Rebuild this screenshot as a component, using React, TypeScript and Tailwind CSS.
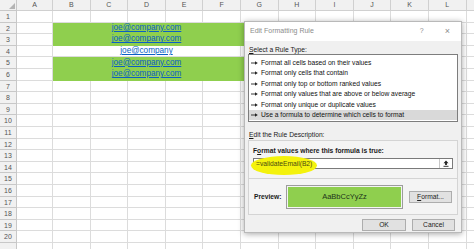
const COLS = ["A", "B", "C", "D", "E", "F", "G", "H", "I", "J", "K", "L", "M"];
const ROWS = Array.from({ length: 21 }, (_, i) => i + 1);
const GREEN = [2, 3, 5, 6];
const EMAIL: Record<number, string> = {
  2: "joe@company.com",
  3: "joe@company.com",
  4: "joe@company",
  5: "joe@company.com",
  6: "joe@company.com",
};

const RULES = [
  "Format all cells based on their values",
  "Format only cells that contain",
  "Format only top or bottom ranked values",
  "Format only values that are above or below average",
  "Format only unique or duplicate values",
  "Use a formula to determine which cells to format",
];

function Arrow() {
  return (
    <svg width="7" height="4" viewBox="0 0 7 4" className="shrink-0">
      <path d="M0 2h4.5" stroke="#222" strokeWidth="0.9" />
      <path d="M4 0.3L6.8 2L4 3.7z" fill="#222" />
    </svg>
  );
}

function Sheet() {
  return (
    <div className="flex flex-col">
      <div className="flex h-[11px] bg-[#f1f1f1]">
        <div className="relative w-[17px] shrink-0 border-r border-b border-[#c8c8c8]">
          <svg width="6" height="6" viewBox="0 0 6 6" className="absolute right-[1px] bottom-[1px]">
            <path d="M6 0V6H0z" fill="#b4b4b4" />
          </svg>
        </div>
        {COLS.map((c, i) => (
          <div
            key={c}
            className={`${i === 0 ? "w-[36px]" : "w-[37.6px]"} shrink-0 border-r border-b border-[#d0d0d0] text-center text-[7px] leading-[10px] text-[#555]`}
          >
            {c === "M" ? "" : c}
          </div>
        ))}
      </div>
      {ROWS.map((r) => {
        const green = GREEN.includes(r);
        const email = EMAIL[r];
        return (
          <div key={r} className="flex h-[11.6px]">
            <div className="w-[17px] shrink-0 bg-[#f1f1f1] border-r border-b border-[#c8c8c8] text-center text-[7px] leading-[11px] text-[#555]">
              {r < 21 ? r : ""}
            </div>
            <div className="w-[36px] shrink-0 border-r border-b border-[#dcdcdc]" />
            {email ? (
              <>
                <div
                  className={`w-[188px] shrink-0 flex items-center justify-center border-r border-b ${
                    green ? "bg-[#8fcf4e] border-[#8fcf4e]" : "border-[#dcdcdc]"
                  }`}
                >
                  <span className="text-[8.2px] leading-none text-[#0b5fc4] underline underline-offset-[1px]">{email}</span>
                </div>
                <div
                  className={`w-[37.6px] shrink-0 border-r border-b ${
                    green ? "bg-[#8fcf4e] border-[#8fcf4e]" : "border-[#dcdcdc]"
                  }`}
                />
              </>
            ) : (
              COLS.slice(1, 7).map((c) => (
                <div key={c} className="w-[37.6px] shrink-0 border-r border-b border-[#dcdcdc]" />
              ))
            )}
            {COLS.slice(7).map((c) => (
              <div key={c} className="w-[37.6px] shrink-0 border-r border-b border-[#dcdcdc]" />
            ))}
          </div>
        );
      })}
    </div>
  );
}

function Btn({ children, className = "" }: { children: React.ReactNode; className?: string }) {
  return (
    <button
      className={`h-[12px] flex items-center justify-center bg-[#e1e1e1] border border-[#adadad] text-[6.7px] text-[#222] ${className}`}
    >
      {children}
    </button>
  );
}

function Dialog() {
  return (
    <div className="absolute left-[244px] top-[21px] w-[218px] h-[212px] flex flex-col border border-[#b9b9b9] shadow-[0_1px_6px_rgba(0,0,0,0.35)] text-[#1a1a1a]">
      <div className="h-[19px] shrink-0 bg-white flex items-center justify-between pl-[5px] pr-[11px] text-[7px] text-[#8c8c8c]">
        <span>Edit Formatting Rule</span>
        <div className="flex items-center gap-[21px]">
          <span className="text-[7px]">?</span>
          <span className="text-[9px] leading-none">×</span>
        </div>
      </div>
      <div className="flex-1 bg-[#f0f0f0] flex flex-col px-[3px] text-[6.7px] leading-[8px]">
        <div className="mt-[5px] h-[8px] pl-[1px]">
          <span className="underline">S</span>elect a Rule Type:
        </div>
        <div className="h-[68px] border border-[#7d7d7d] bg-white pt-[2.8px] flex flex-col text-[#111]">
          {RULES.map((t, i) => (
            <div
              key={t}
              className={`h-[10.4px] flex items-center gap-[3px] pl-[2px] ${i === RULES.length - 1 ? "bg-[#d9d9d9]" : ""}`}
            >
              <Arrow />
              <span>{t}</span>
            </div>
          ))}
        </div>
        <div className="mt-[9px] h-[8px] pl-[1px]">
          <span className="underline">E</span>dit the Rule Description:
        </div>
        <div className="mt-[1px] h-[75px] border border-[#d4d4d4] bg-[#f4f4f4] flex flex-col">
          <div className="h-[38px] border-b border-[#d4d4d4] flex flex-col px-[4px]">
            <div className="mt-[6px] h-[8px] font-bold">
              F<span className="underline">o</span>rmat values where this formula is true:
            </div>
            <div className="mt-[3px] h-[11px] flex border border-[#7a7a7a] bg-white">
              <div className="relative flex-1 flex items-center pl-[2px]">
                <div className="absolute left-[-3px] top-[-3px] w-[66px] h-[19px] rounded-[50%] bg-[#f4f20c]" />
                <span className="relative text-[#4a4a10]">=validateEmail(B2)</span>
              </div>
              <div className="w-[13px] border-l border-[#c8c8c8] flex items-center justify-center">
                <svg width="6" height="7" viewBox="0 0 6 7">
                  <path d="M3 0.5L5.5 3.2H3.9V5H2.1V3.2H0.5z" fill="#222" />
                  <path d="M0.5 6.3h5" stroke="#222" strokeWidth="0.9" />
                </svg>
              </div>
            </div>
          </div>
          <div className="flex-1 flex items-center px-[5px]">
            <span className="w-[32px] font-bold">Preview:</span>
            <div className="w-[117px] h-[24px] border border-[#9c9c9c] p-[1px] bg-[#f4f4f4]">
              <div className="w-full h-full bg-[#8fcf4e] flex items-center justify-center text-[7.5px] text-[#1d331a]">
                AaBbCcYyZz
              </div>
            </div>
            <Btn className="ml-[6px] w-[43px]">
              <span className="underline">F</span>ormat...
            </Btn>
          </div>
        </div>
        <div className="mt-[4px] flex justify-end gap-[6px] pr-[3px]">
          <Btn className="w-[44px]">OK</Btn>
          <Btn className="w-[43px]">Cancel</Btn>
        </div>
      </div>
    </div>
  );
}

export default function App() {
  return (
    <div className="relative w-[474px] h-[249px] overflow-hidden bg-white font-['Liberation_Sans',Arial,sans-serif]">
      <Sheet />
      <Dialog />
    </div>
  );
}
